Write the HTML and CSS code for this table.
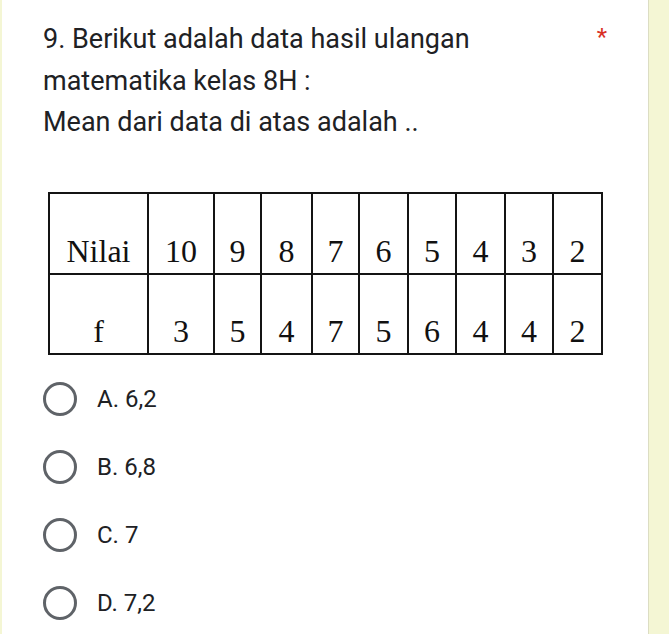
FILE: index.html
```html
<!DOCTYPE html>
<html lang="id">
<head>
<meta charset="utf-8">
<title>Pertanyaan 9</title>
<link rel="stylesheet" href="styles.css">
</head>
<body>
<div class="card">
  <div class="title-row">
    <div class="title">9. Berikut adalah data hasil ulangan<br>matematika kelas 8H :<br>Mean dari data di atas adalah ..</div>
    <span class="required">*</span>
  </div>
  <table class="data">
    <colgroup>
      <col class="c-head"><col class="c-10"><col class="c-9"><col class="c-8"><col class="c-7">
      <col class="c-6"><col class="c-5"><col class="c-4"><col class="c-3"><col class="c-2">
    </colgroup>
    <tr class="r1">
      <td>Nilai</td><td>10</td><td>9</td><td>8</td><td>7</td><td>6</td><td>5</td><td>4</td><td>3</td><td>2</td>
    </tr>
    <tr class="r2">
      <td>f</td><td>3</td><td>5</td><td>4</td><td>7</td><td>5</td><td>6</td><td>4</td><td>4</td><td>2</td>
    </tr>
  </table>
  <div class="options">
    <div class="option"><span class="radio"></span><span class="label">A. 6,2</span></div>
    <div class="option"><span class="radio"></span><span class="label">B. 6,8</span></div>
    <div class="option"><span class="radio"></span><span class="label">C. 7</span></div>
    <div class="option"><span class="radio"></span><span class="label">D. 7,2</span></div>
  </div>
</div>
</body>
</html>
```
FILE: styles.css
```css
html, body {
  margin: 0;
  padding: 0;
}
body {
  background: #f4f6d4;
  font-family: Roboto, "Noto Sans", sans-serif;
  color: #202124;
  overflow: hidden;
  height: 634px;
}
.card {
  box-sizing: border-box;
  background: #fff;
  width: 647px;
  height: 634px;
  margin-left: 2px;
  padding: 19px 41px 0 41px;
  border-right: 1px solid #dcddc3;
}
.title-row {
  display: flex;
  align-items: flex-start;
}
.title {
  flex: 1;
  font-size: 27px;
  line-height: 41.5px;
}
.required {
  font-size: 24px;
  line-height: 36px;
  color: #d93025;
}
.data {
  margin: 48.5px 0 0 5px;
  border-collapse: collapse;
  table-layout: fixed;
  width: 553px;
  font-family: "Liberation Serif", "Times New Roman", serif;
  font-size: 32px;
  color: #111;
}
.data td {
  border: 2px solid #141414;
  text-align: center;
  vertical-align: bottom;
  padding: 0 0 6px;
  line-height: 32px;
}
.r1 { height: 81px; }
.r2 { height: 80px; }
.c-head { width: 99px; }
.c-10 { width: 66px; }
.c-9 { width: 47px; }
.c-8 { width: 51px; }
.c-7 { width: 47px; }
.c-6 { width: 49px; }
.c-5 { width: 48px; }
.c-4 { width: 49px; }
.c-3 { width: 48px; }
.c-2 { width: 49px; }
.options {
  display: flex;
  flex-direction: column;
  gap: 34px;
  margin-top: 27px;
}
.option {
  display: flex;
  align-items: center;
}
.radio {
  box-sizing: border-box;
  width: 34px;
  height: 34px;
  border: 3px solid #5f6368;
  border-radius: 50%;
  flex: none;
}
.label {
  margin-left: 20px;
  font-size: 24px;
  color: #202124;
}
```
